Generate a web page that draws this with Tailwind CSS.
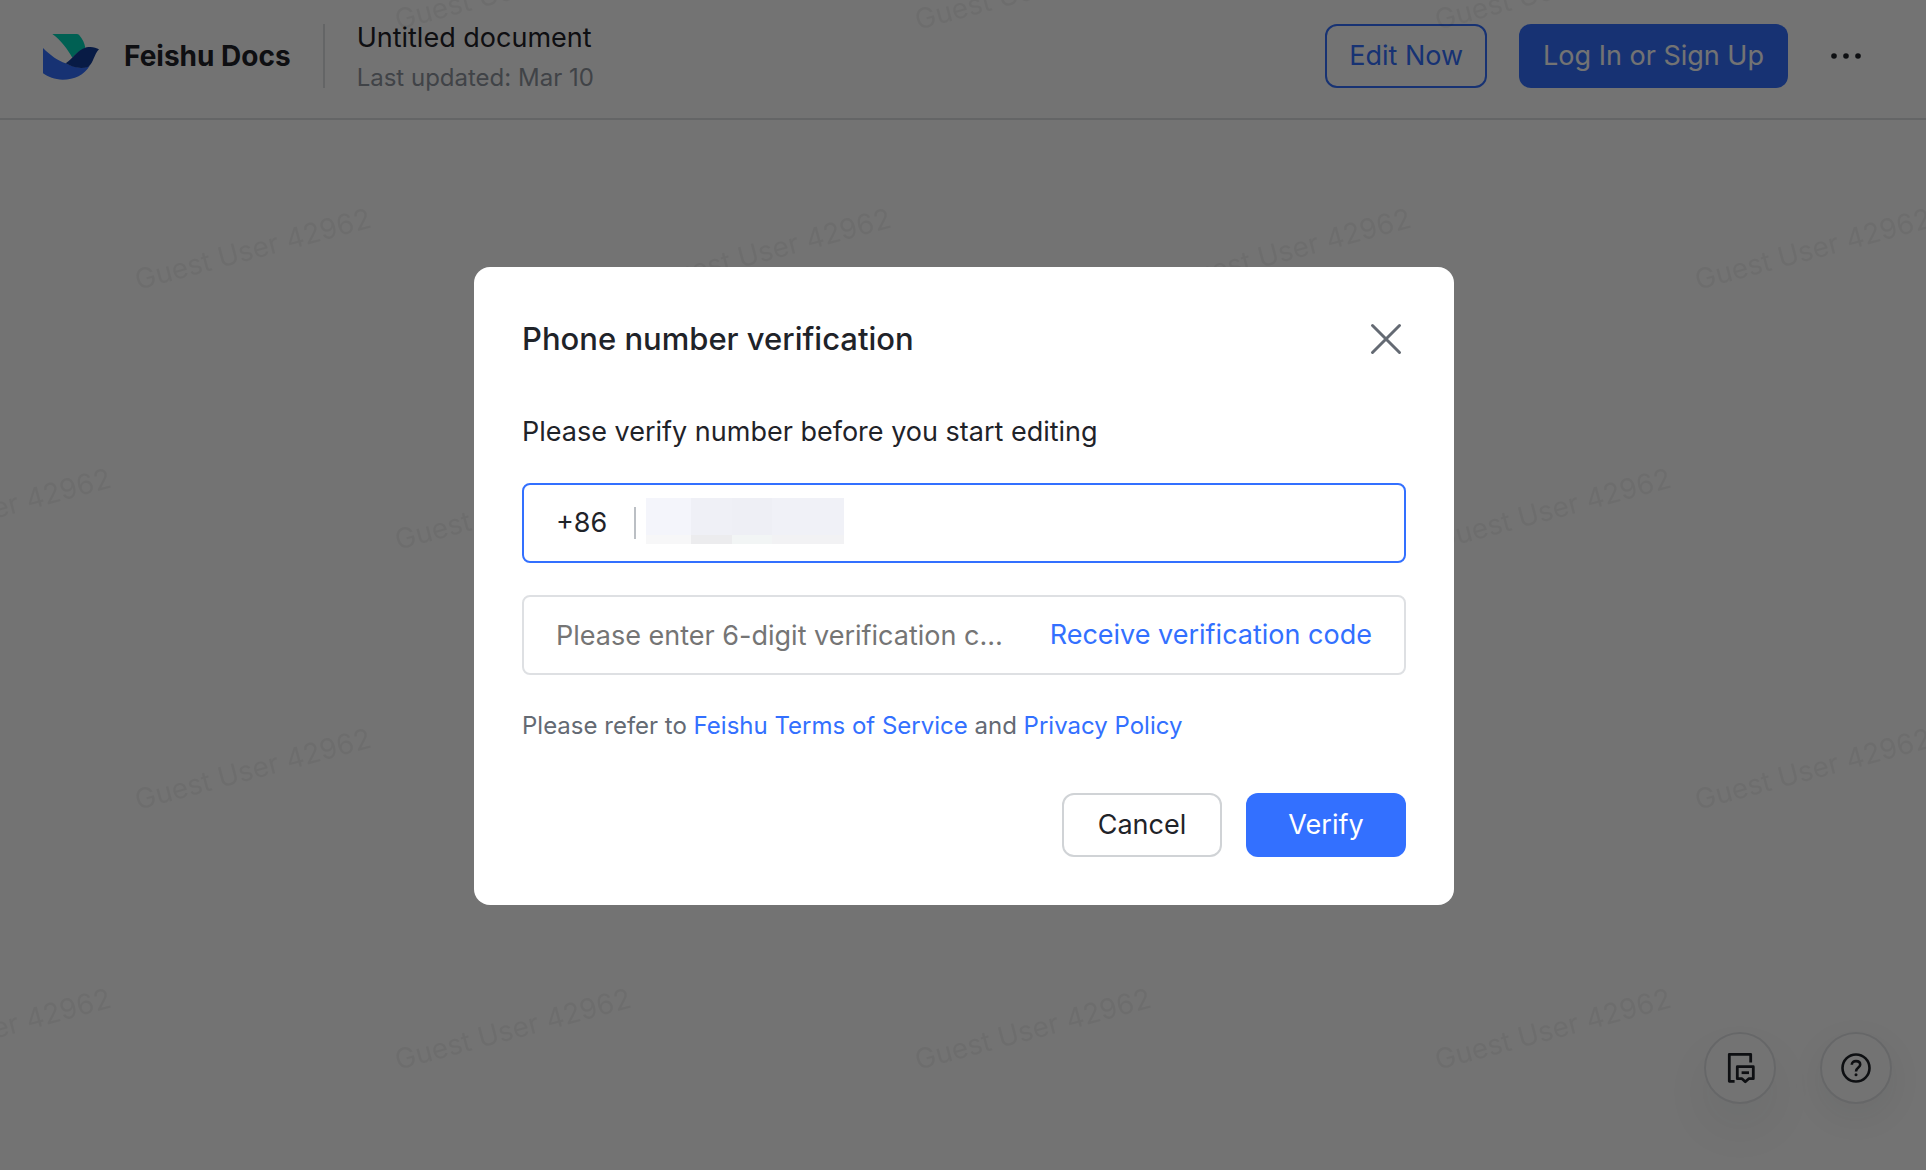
<!DOCTYPE html>
<html lang="en">
<head>
<meta charset="utf-8">
<meta name="viewport" content="width=device-width, initial-scale=1">
<title>Untitled document - Feishu Docs</title>
<script src="https://cdn.jsdelivr.net/npm/@tailwindcss/browser@4"></script>
</head>
<body class="bg-white font-['Inter','Liberation_Sans',sans-serif] text-[27px] text-[#1f2329]">
<div class="relative flex min-h-screen flex-col overflow-hidden">

  <header class="flex items-center border-b-2 border-[#dee0e3] pt-6 pr-[54px] pb-[30px] pl-[43px]">
    <a href="#" class="flex items-center gap-[25px] text-[28px] leading-10 font-bold">
      <svg class="h-[47px] w-14" viewBox="69 39 168 141" aria-hidden="true">
        <path fill="#00d6b9" d="M97 42H170Q175 42 178 46C188 58 194 70 196 84C182 90 170 100 157 113C143 88 124 62 97 42Z"/>
        <path fill="#3370ff" d="M69 84C91 106 113 122 137 130C160 142 187 148 209 137C193 164 163 179 128 179C104 179 84 171 69 160Z"/>
        <path fill="#133c9a" d="M137 130C157 118 171 90 200 82C214 79 228 82 237 88C222 103 221 128 205 140C184 148 160 143 137 130Z"/>
      </svg>
      <span>Feishu Docs</span>
    </a>
    <div class="ml-8 h-16 w-0.5 bg-[#dee0e3]"></div>
    <div class="-my-2.5 ml-8 pt-1">
      <h1 class="leading-10">Untitled document</h1>
      <p class="text-[24px] leading-10 text-[#8f959e]">Last updated: Mar 10</p>
    </div>
    <div class="ml-auto flex items-center gap-8">
      <button type="button" class="h-16 rounded-xl border-2 border-[#3370ff] px-[22px] text-[#3370ff]">Edit Now</button>
      <button type="button" class="h-16 rounded-xl bg-[#3370ff] px-6 text-white">Log In or Sign Up</button>
      <button type="button" aria-label="More" class="flex h-12 w-[52px] items-center justify-center">
        <svg class="size-8" viewBox="0 0 32 32" fill="currentColor" aria-hidden="true"><circle cx="4" cy="16" r="2.8"/><circle cx="16" cy="16" r="2.8"/><circle cx="28" cy="16" r="2.8"/></svg>
      </button>
    </div>
  </header>

  <main class="flex-1"></main>

  <!-- Guest watermark, tiled over the whole page -->
  <svg class="pointer-events-none absolute inset-0 size-full" aria-hidden="true">
    <defs>
      <pattern id="watermark" x="0" y="40" width="520" height="520" patternUnits="userSpaceOnUse">
        <g class="fill-black/5 text-[28px]">
          <text transform="translate(138 250) rotate(-15)">Guest User 42962</text>
          <text transform="translate(398 510) rotate(-15)">Guest User 42962</text>
          <text transform="translate(-122 510) rotate(-15)">Guest User 42962</text>
        </g>
      </pattern>
    </defs>
    <rect width="100%" height="100%" fill="url(#watermark)"/>
  </svg>

  <div class="fixed right-[34px] bottom-[66px] flex gap-11">
    <button type="button" aria-label="Comments" class="flex size-18 items-center justify-center rounded-full border-2 border-[#e3e4e7] bg-white shadow-[0_24px_64px_rgba(31,35,41,0.08)]">
      <svg class="size-9" viewBox="0 0 36 36" fill="none" stroke="currentColor" stroke-width="2.8" stroke-linejoin="round" aria-hidden="true">
        <path d="M12.6 31.3H7.3V4.3H28.7V12.6"/>
        <path d="M15.3 16.7H31.3V28.7H26.7L23.3 31.7L20 28.7H15.3Z"/>
        <path d="M19.6 22.7H27"/>
      </svg>
    </button>
    <button type="button" aria-label="Help" class="flex size-18 items-center justify-center rounded-full border-2 border-[#e3e4e7] bg-white shadow-[0_12px_48px_rgba(31,35,41,0.08)]">
      <svg class="size-9" viewBox="0 0 36 36" fill="none" stroke="currentColor" stroke-width="2.6" aria-hidden="true">
        <circle cx="18" cy="18" r="13.5"/>
        <path d="M13.8 14.8C13.8 12.4 15.6 11.1 18 11.1C20.5 11.1 22.2 12.6 22.2 14.7C22.2 17.4 18 17.6 18 21.4"/>
        <circle cx="18" cy="24.8" r="1.5" fill="currentColor" stroke="none"/>
      </svg>
    </button>
  </div>
</div>

<div class="fixed inset-0 flex items-center justify-center bg-black/55 pt-0.5 pl-0.5">
  <form role="dialog" aria-modal="true" aria-labelledby="dialog-title" class="w-[980px] max-w-full rounded-2xl bg-white p-12">
    <div class="flex items-center justify-between">
      <h2 id="dialog-title" class="text-[31px] leading-12 font-medium">Phone number verification</h2>
      <button type="button" aria-label="Close" class="flex size-10 items-center justify-center text-[#646a73]">
        <svg class="size-10" viewBox="0 0 40 40" fill="none" stroke="currentColor" stroke-width="3" stroke-linecap="round" aria-hidden="true"><path d="M6.5 6.5L33.5 33.5M33.5 6.5L6.5 33.5"/></svg>
      </button>
    </div>
    <p class="mt-[45px] leading-12">Please verify number before you start editing</p>

    <div class="mt-[27px] flex h-20 items-center rounded-lg border-2 border-[#3370ff] px-8">
      <label for="phone">+86</label>
      <div class="mr-2.5 ml-[27px] h-8 w-0.5 bg-[#bbbfc4]"></div>
      <svg class="mb-1 h-[46px] w-[198px]" viewBox="0 0 198 46" shape-rendering="crispEdges" aria-hidden="true">
        <rect width="45" height="37" fill="#f4f5fb"/><rect x="45" width="41" height="37" fill="#eff0f6"/><rect x="86" width="40" height="37" fill="#eeeff5"/><rect x="126" width="72" height="37" fill="#f0f1f7"/>
        <rect y="37" width="45" height="9" fill="#f7f7f8"/><rect x="45" y="37" width="41" height="9" fill="#ececee"/><rect x="86" y="37" width="40" height="9" fill="#f2f5f5"/><rect x="126" y="37" width="72" height="9" fill="#f2f2f4"/>
      </svg>
      <input id="phone" type="tel" class="h-full min-w-0 flex-1 outline-none">
    </div>

    <div class="mt-8 flex h-20 items-center gap-9 rounded-lg border-2 border-[#dee0e3] px-8">
      <input type="text" inputmode="numeric" aria-label="Verification code" placeholder="Please enter 6-digit verification code" class="h-full min-w-0 flex-1 text-ellipsis outline-none placeholder:text-[#757575]">
      <button type="button" class="text-[#3370ff]">Receive verification code</button>
    </div>

    <p class="mt-[33px] text-[24px] leading-9 text-[#646a73]">Please refer to <a href="#" class="text-[#3370ff]">Feishu Terms of Service</a> and <a href="#" class="text-[#3370ff]">Privacy Policy</a></p>

    <div class="mt-[49px] flex justify-end gap-6">
      <button type="button" class="h-16 w-40 rounded-xl border-2 border-[#d0d3d6]">Cancel</button>
      <button type="submit" class="h-16 w-40 rounded-xl bg-[#3370ff] text-white">Verify</button>
    </div>
  </form>
</div>
</body>
</html>
